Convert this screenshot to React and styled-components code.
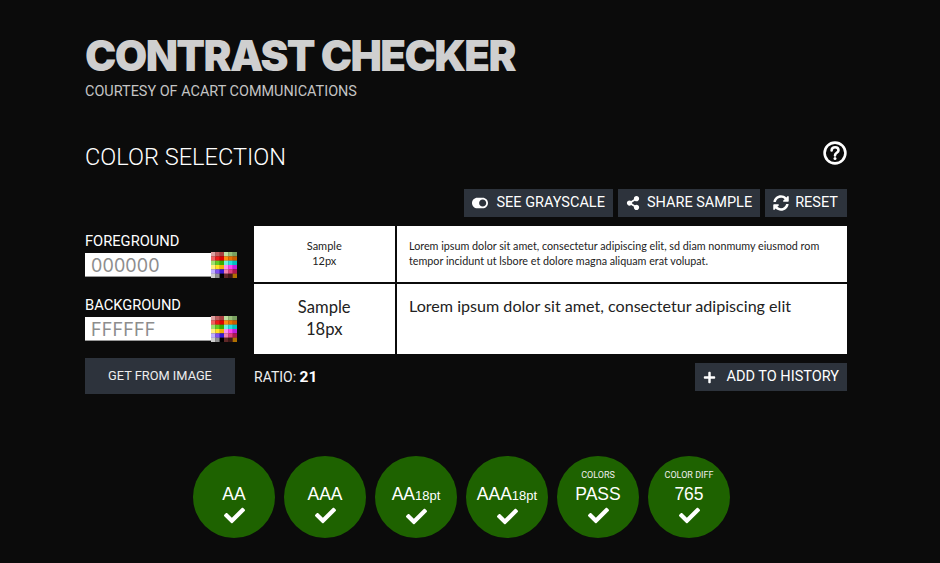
import React from "react";
import styled, { createGlobalStyle } from "styled-components";
import { FaCheck, FaShareAlt, FaSyncAlt, FaToggleOn, FaPlus } from "react-icons/fa";

const Global = createGlobalStyle`
  html, body { margin: 0; padding: 0; background: #0b0b0b; }
  * { box-sizing: border-box; }
`;
const Page = styled.div`
  width: 940px; height: 563px; overflow: hidden; background: #0b0b0b;
  padding: 33px 93px 0 85px; color: #fff;
  font-family: Roboto, sans-serif;
`;
const Title = styled.h1`
  margin: 0; font: 900 42px/46px Inter, sans-serif; color: #cfcfcf; letter-spacing: -1.65px;
`;
const Courtesy = styled.div`
  margin-top: 4px; font: 400 14.45px/18px Roboto, sans-serif; color: #c4c4c4;
`;
const SectionRow = styled.div`
  margin-top: 43px; display: flex; justify-content: space-between; align-items: center; height: 26px;
`;
const SectionTitle = styled.h2`
  margin: 0; font: 300 23.6px/26px Roboto, sans-serif; color: #fff;
`;
const Help = styled.svg`width: 24px; height: 24px; display: block; margin-top: -8px;`;
const Actions = styled.div`
  margin-top: 19px; display: flex; justify-content: flex-end; gap: 5px;
`;
const Btn = styled.button`
  height: 28px; border: 0; background: #2d333c; color: #fff; padding: 0 ${p => p.$pr || 8}px 0 8px;
  display: flex; align-items: center; gap: ${p => p.$gap || 8}px;
  font: 400 14.5px/28px Roboto, sans-serif; svg { display: block; }
`;
const Main = styled.div`
  margin-top: 9px; display: grid; grid-template-columns: 169px 593px;
`;
const Side = styled.div`display: flex; flex-direction: column;`;
const Label = styled.div`
  margin-top: ${p => p.$mt || 0}px; font: 400 14.7px/16px Roboto, sans-serif; color: #fff;
`;
const InputRow = styled.div`
  display: flex; height: 26px; margin-top: 3px; width: 152px;
`;
const Hex = styled.div`
  width: 126px; height: 24px; margin-top: 1px; background: #fff; border-bottom: 1px solid #999;
  padding-left: 6px; font: 400 18px/25px Inter, sans-serif; color: #8d8d8d; letter-spacing: .1px;
`;
const Swatch = styled.svg`width: 26px; height: 26px; display: block;`;
const ImageBtn = styled.button`
  margin-top: 16px; width: 150px; height: 36px; border: 0; background: #2d333c; color: #eee;
  font: 400 12.8px/36px Roboto, sans-serif; text-align: center; padding: 0;
`;
const Table = styled.div`
  display: grid; grid-template-columns: 140.5px 1fr; grid-template-rows: 56px 70px; gap: 2px; background: #0b0b0b;
`;
const SizeCell = styled.div`
  background: #fff; color: #222; text-align: center; display: flex; align-items: center; justify-content: center;
  font: 400 ${p => p.$s}px/${p => p.$l}px Lato, sans-serif; padding-bottom: ${p => p.$pb}px;
`;
const TextCell = styled.div`
  background: #fff; color: #222; font: 400 ${p => p.$s}px/${p => p.$l}px Lato, sans-serif;
  padding: ${p => p.$pt}px 12px 0 12.5px;
`;
const Bottom = styled.div`
  margin-top: 9px; display: flex; justify-content: space-between; align-items: center; height: 28px;
`;
const Ratio = styled.div`
  font: 400 14px/28px Roboto, sans-serif; color: #eee;
  strong { font-weight: 700; font-size: 15.5px; color: #fff; }
`;
const Circles = styled.div`
  margin-top: 62px; margin-left: 108px; display: flex; gap: 9px;
`;
const Circle = styled.div`
  position: relative; width: 82px; height: 82px; border-radius: 50%; background: #1e6200; color: #fff;
  display: flex; flex-direction: column; align-items: center;
  padding-top: ${p => p.$top ? 14 : 29}px;
`;
const Top = styled.div`font: 400 9px/11px Roboto, sans-serif; color: #eee; margin-bottom: 4px;`;
const Big = styled.div`
  font: 400 17.5px/19px "Liberation Sans", sans-serif; color: #fff; white-space: nowrap;
  small { font-size: 13px; }
`;
const Tick = styled(FaCheck)`margin-top: 1px; display: block;`;

const palette = [
  ["#dda0a0","#c06060","#a84040","#c0e0a0","#98c078","#78a060"],
  ["#f06060","#ee1818","#dd0000","#ff8c10","#e87000","#c85c00"],
  ["#a0e070","#60cc20","#38aa00","#70f0e0","#20e0e0","#00c0c0"],
  ["#fff080","#ffe020","#f0b000","#ff90f0","#ff40f0","#c020e0"],
  ["#c0b0ff","#8050f0","#3818d0","#f080b0","#e04080","#b01850"],
  ["#d0d0d0","#909090","#000000","#602828","#401818","#b07000"],
];
const SwatchIcon = () => (
  <Swatch viewBox="0 0 26 26">
    {palette.map((row, y) => row.map((c, x) => (
      <rect key={x + "-" + y} x={x * 13 / 3} y={y * 13 / 3} width={13 / 3 + .2} height={13 / 3 + .2} fill={c} />
    )))}
  </Swatch>
);
const Badge = ({ top, big, small }) => (
  <Circle $top={!!top}>
    {top && <Top>{top}</Top>}
    <Big>{big}{small && <small>{small}</small>}</Big>
    <Tick size={21} />
  </Circle>
);

export default function App() {
  return (
    <Page>
      <Global />
      <Title>CONTRAST CHECKER</Title>
      <Courtesy>COURTESY OF ACART COMMUNICATIONS</Courtesy>
      <SectionRow>
        <SectionTitle>COLOR SELECTION</SectionTitle>
        <Help viewBox="0 0 24 24" fill="none" stroke="#fff" strokeWidth="2.6">
          <circle cx="12" cy="12" r="10.4" />
          <path d="M8.6 9.4c0-2 1.5-3.2 3.5-3.2s3.4 1.2 3.4 3c0 2.6-3.5 2.6-3.5 5.2" strokeLinecap="round" />
          <circle cx="12" cy="17.6" r="1.5" fill="#fff" stroke="none" />
        </Help>
      </SectionRow>
      <Actions>
        <Btn><FaToggleOn size={16} />SEE GRAYSCALE</Btn>
        <Btn $gap={7}><FaShareAlt size={14} />SHARE SAMPLE</Btn>
        <Btn $gap={6} $pr={9}><FaSyncAlt size={16} />RESET</Btn>
      </Actions>
      <Main>
        <Side>
          <Label $mt={7}>FOREGROUND</Label>
          <InputRow><Hex>000000</Hex><SwatchIcon /></InputRow>
          <Label $mt={19}>BACKGROUND</Label>
          <InputRow><Hex>FFFFFF</Hex><SwatchIcon /></InputRow>
          <ImageBtn>GET FROM IMAGE</ImageBtn>
        </Side>
        <div>
          <Table>
            <SizeCell $s={11} $l={15} $pb={2}>Sample<br />12px</SizeCell>
            <TextCell $s={10.75} $l={15} $pt={12}>Lorem ipsum dolor sit amet, consectetur adipiscing elit, sd diam nonmumy eiusmod rom tempor incidunt ut lsbore et dolore magna aliquam erat volupat.</TextCell>
            <SizeCell $s={16.6} $l={22} $pb={3}>Sample<br />18px</SizeCell>
            <TextCell $s={16.1} $l={22} $pt={11}>Lorem ipsum dolor sit amet, consectetur adipiscing elit</TextCell>
          </Table>
          <Bottom>
            <Ratio>RATIO: <strong>21</strong></Ratio>
            <Btn $gap={11}><FaPlus size={13} />ADD TO HISTORY</Btn>
          </Bottom>
        </div>
      </Main>
      <Circles>
        <Badge big="AA" />
        <Badge big="AAA" />
        <Badge big="AA" small="18pt" />
        <Badge big="AAA" small="18pt" />
        <Badge top="COLORS" big="PASS" />
        <Badge top="COLOR DIFF" big="765" />
      </Circles>
    </Page>
  );
}
